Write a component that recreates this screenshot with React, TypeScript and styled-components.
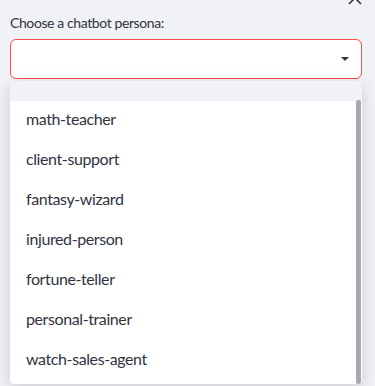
import React from "react";
import styled, { createGlobalStyle } from "styled-components";

const Global = createGlobalStyle`
  html, body { margin: 0; padding: 0; background: #f0f2f6; }
  body { font-family: Lato, "Noto Sans", sans-serif; color: rgb(49, 51, 63); overflow: hidden; letter-spacing: -0.4px; }
`;

const Sidebar = styled.div`
  position: relative;
  width: 375px;
  height: 386px;
  box-sizing: border-box;
  padding: 14px 13px 0 10px;
  display: flex;
  flex-direction: column;
  overflow: hidden;
`;

const CloseButton = styled.div`
  position: absolute;
  top: -9px;
  right: 13px;
  width: 14px;
  height: 14px;
  display: flex;
`;

const Label = styled.div`
  font-size: 14px;
  line-height: 18px;
  height: 18px;
  margin-bottom: 7px;
`;

const Select = styled.div`
  height: 40px;
  box-sizing: border-box;
  border: 1px solid #ff4b4b;
  border-radius: 6px;
  background: #fff;
  display: flex;
  align-items: center;
  justify-content: flex-end;
  padding-right: 12px;
`;

const Caret = styled.div`
  width: 0;
  height: 0;
  border-left: 4px solid transparent;
  border-right: 4px solid transparent;
  border-top: 4px solid #31333f;
`;

const Menu = styled.div`
  position: relative;
  margin-top: 2px;
  background: #fff;
  border-radius: 4px;
  box-shadow: 0 4px 16px rgba(0, 0, 0, 0.16);
  overflow: hidden;
  flex: 1;
  margin-bottom: 2px;
`;

const PartialRow = styled.div`
  height: 20px;
  background: #f0f2f6;
`;

const Option = styled.div`
  height: 40px;
  box-sizing: border-box;
  display: flex;
  align-items: center;
  padding: 0 0 5px 16px;
  font-size: 16px;
`;

const Thumb = styled.div`
  position: absolute;
  right: 1px;
  top: 19px;
  bottom: 0;
  width: 5px;
  background: #a8a8ae;
  border-radius: 2px;
`;

const options = [
  "math-teacher",
  "client-support",
  "fantasy-wizard",
  "injured-person",
  "fortune-teller",
  "personal-trainer",
  "watch-sales-agent",
];

export default function App() {
  return (
    <>
      <Global />
      <Sidebar>
        <CloseButton>
          <svg width="14" height="14" viewBox="0 0 14 14">
            <path d="M1 1 L13 13 M13 1 L1 13" stroke="#31333f" strokeWidth="1.6" fill="none" />
          </svg>
        </CloseButton>
        <Label>Choose a chatbot persona:</Label>
        <Select>
          <Caret />
        </Select>
        <Menu>
          <PartialRow />
          {options.map((o) => (
            <Option key={o}>{o}</Option>
          ))}
          <Thumb />
        </Menu>
      </Sidebar>
    </>
  );
}
